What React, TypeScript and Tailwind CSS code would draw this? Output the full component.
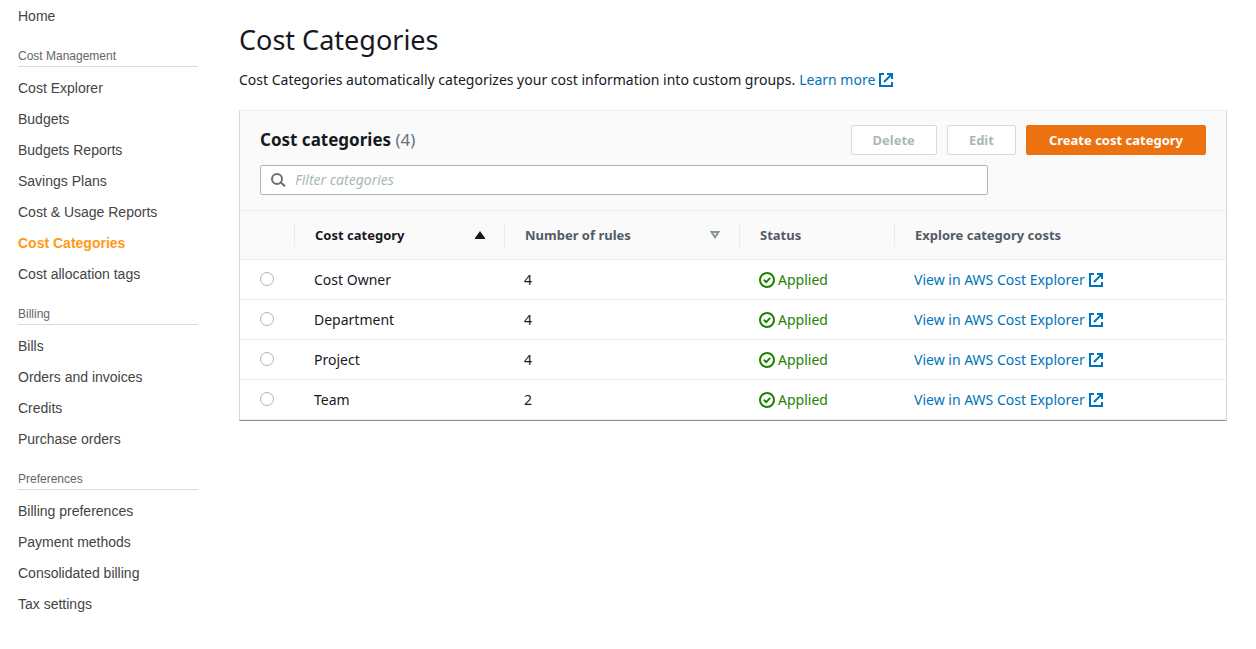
import React from "react";

type NavSection = { title: string; items: string[] };

const sections: NavSection[] = [
  {
    title: "Cost Management",
    items: [
      "Cost Explorer",
      "Budgets",
      "Budgets Reports",
      "Savings Plans",
      "Cost & Usage Reports",
      "Cost Categories",
      "Cost allocation tags",
    ],
  },
  { title: "Billing", items: ["Bills", "Orders and invoices", "Credits", "Purchase orders"] },
  {
    title: "Preferences",
    items: ["Billing preferences", "Payment methods", "Consolidated billing", "Tax settings"],
  },
];

const categories = [
  { name: "Cost Owner", rules: 4 },
  { name: "Department", rules: 4 },
  { name: "Project", rules: 4 },
  { name: "Team", rules: 2 },
];

const activeItem = "Cost Categories";

function ExternalIcon() {
  return (
    <svg className="ml-[3px] inline-block size-4 shrink-0" viewBox="0 0 16 16" fill="none" stroke="currentColor" strokeWidth="2" aria-hidden="true">
      <path d="M6 2H2v12h12v-4" />
      <path d="M9 2h5v5" />
      <path d="M6 10l7.5-7.5" />
    </svg>
  );
}

function AppliedIcon() {
  return (
    <svg className="size-4 shrink-0" viewBox="0 0 16 16" fill="none" stroke="currentColor" strokeWidth="2" aria-hidden="true">
      <circle cx="8" cy="8" r="7" />
      <path d="M4.8 7.8l2.4 2.3 4-4.2" />
    </svg>
  );
}

function SearchIcon() {
  return (
    <svg className="size-4 shrink-0 text-[#687078]" viewBox="0 0 16 16" fill="none" stroke="currentColor" strokeWidth="2" aria-hidden="true">
      <circle cx="6" cy="7" r="5" />
      <path d="M9.8 10.4L14 14.2" />
    </svg>
  );
}

function SideNav() {
  return (
    <nav className="w-[198px] shrink-0 pl-[18px] pt-px font-['Liberation_Sans',Arial,sans-serif] text-sm text-[#444]">
      <a href="#home" className="block leading-[31px]">
        Home
      </a>
      {sections.map((section) => (
        <section key={section.title}>
          <h2 className="mb-1.5 flex h-[35px] items-end border-b border-[#dddddd] pb-[2px] text-xs leading-4 text-[#666]">
            {section.title}
          </h2>
          <ul>
            {section.items.map((item) => (
              <li key={item}>
                <a
                  href="#nav"
                  aria-current={item === activeItem ? "page" : undefined}
                  className={
                    item === activeItem
                      ? "block font-bold leading-[31px] text-[#ff9914]"
                      : "block leading-[31px]"
                  }
                >
                  {item}
                </a>
              </li>
            ))}
          </ul>
        </section>
      ))}
    </nav>
  );
}

function CategoryTable() {
  return (
    <table className="w-full table-fixed border-collapse text-left">
      <colgroup>
        <col className="w-[54px]" />
        <col className="w-[210px]" />
        <col className="w-[235px]" />
        <col className="w-[155px]" />
        <col />
      </colgroup>
      <thead className="bg-[#fafafa] text-[13px] text-[#545b64]">
        <tr className="h-12 border-b border-[#eaeded]">
          <td />
          <th scope="col" aria-sort="ascending" className="p-0 font-bold text-[#16191f]">
            <div className="flex h-6 items-center justify-between border-l border-[#eaeded] pl-5 pr-[19px]">
              Cost category
              <svg className="h-2 w-2.5" viewBox="0 0 10 8" fill="currentColor" aria-hidden="true">
                <path d="M5 0l5 7v1H0V7z" />
              </svg>
            </div>
          </th>
          <th scope="col" className="p-0 font-bold">
            <div className="flex h-6 items-center justify-between border-l border-[#eaeded] pl-5 pr-[19px]">
              Number of rules
              <svg className="h-2 w-2.5 text-[#879596]" viewBox="0 0 10 8" fill="none" stroke="currentColor" strokeWidth="2" aria-hidden="true">
                <path d="M1.6 1h6.8L5 6.2z" />
              </svg>
            </div>
          </th>
          <th scope="col" className="p-0 font-bold">
            <div className="flex h-6 items-center border-l border-[#eaeded] px-5">Status</div>
          </th>
          <th scope="col" className="p-0 font-bold">
            <div className="flex h-6 items-center border-l border-[#eaeded] px-5">Explore category costs</div>
          </th>
        </tr>
      </thead>
      <tbody>
        {categories.map((category) => (
          <tr key={category.name} className="h-10 border-b border-[#eaeded]">
            <td className="pl-5">
              <input
                type="radio"
                name="category"
                aria-label={category.name}
                className="block size-[14px] appearance-none rounded-full border border-[#aab7b8] bg-white checked:border-4 checked:border-[#0073bb]"
              />
            </td>
            <td className="px-5 pt-px">{category.name}</td>
            <td className="px-5 pt-px">{category.rules}</td>
            <td className="px-5 pt-px">
              <span className="flex items-center gap-[3px] text-[#1d8102]">
                <AppliedIcon />
                Applied
              </span>
            </td>
            <td className="px-5 pt-px">
              <a href="#explore" className="flex items-center text-[#0073bb]">
                View in AWS Cost Explorer
                <ExternalIcon />
              </a>
            </td>
          </tr>
        ))}
      </tbody>
    </table>
  );
}

export default function App() {
  return (
    <div className="flex min-h-screen bg-white">
      <SideNav />
      <main className="min-w-0 flex-1 pl-[41px] pr-[29px] pt-[22px] font-['Noto_Sans',sans-serif] text-sm leading-5 text-[#16191f]">
        <h1 className="text-[27px] leading-9">Cost Categories</h1>
        <p className="mt-3 flex items-center">
          Cost Categories automatically categorizes your cost information into custom groups.
          <a href="#learn" className="ml-1 flex items-center text-[#0073bb]">
            Learn more
            <ExternalIcon />
          </a>
        </p>
        <section className="mt-5 border border-b-[#879596] border-l-[#d5dbdb] border-r-[#d5dbdb] border-t-[#eaeded]">
          <div className="border-b border-[#eaeded] bg-[#fafafa] px-5 pb-[15px] pt-[14px]">
            <div className="flex h-[30px] items-center justify-between">
              <h2 className="text-[17px] font-bold leading-7">
                Cost categories <span className="font-normal text-[#687078]">(4)</span>
              </h2>
              <div className="flex gap-2.5 text-[13px] font-bold">
                <button type="button" disabled className="h-[30px] rounded-[2px] border border-[#d5dbdb] bg-white px-[21px] text-[#aab7b8]">
                  Delete
                </button>
                <button type="button" disabled className="h-[30px] rounded-[2px] border border-[#d5dbdb] bg-white px-[21px] text-[#aab7b8]">
                  Edit
                </button>
                <button type="button" className="h-[30px] rounded-[2px] border border-[#ec7211] bg-[#ec7211] px-[22px] text-white">
                  Create cost category
                </button>
              </div>
            </div>
            <label className="mt-2.5 flex h-[30px] w-[77%] items-center gap-2 rounded-[2px] border border-[#aab7b8] bg-white px-2.5">
              <SearchIcon />
              <input
                type="text"
                aria-label="Filter categories"
                placeholder="Filter categories"
                className="min-w-0 flex-1 bg-transparent outline-none placeholder:italic placeholder:text-[#aab7b8]"
              />
            </label>
          </div>
          <CategoryTable />
        </section>
      </main>
    </div>
  );
}
